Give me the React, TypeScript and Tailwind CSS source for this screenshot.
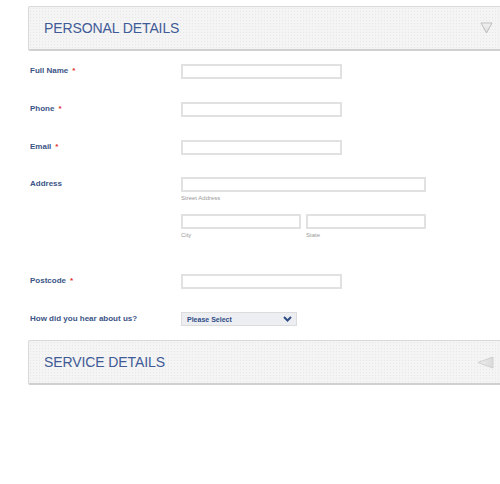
import React from "react";

const dots =
  "bg-[#f4f4f4] bg-[radial-gradient(#e8e8e8_0.6px,transparent_0.7px)] bg-[length:3px_3px]";

function SectionHeader({ title, open }: { title: string; open?: boolean }) {
  return (
    <div
      className={`ml-[28px] flex h-[45px] w-[474px] items-center justify-between rounded-l-[2px] border border-r-0 border-[#d9d9d9] border-b-2 border-b-[#d0d0d0] ${dots}`}
    >
      <h2 className="pl-[15px] text-[14px] font-normal leading-none tracking-[-0.1px] text-[#3f5b97]">
        {title}
      </h2>
      <div className="flex items-center">
        {open ? (
          <svg width="13" height="12" viewBox="0 0 13 12" className="mr-[9px]">
            <defs>
              <linearGradient id="gd" x1="0" y1="0" x2="0" y2="1">
                <stop offset="0" stopColor="#f2f2f2" />
                <stop offset="1" stopColor="#dcdcdc" />
              </linearGradient>
            </defs>
            <path d="M1 1 L12 1 L6.5 11 Z" fill="url(#gd)" stroke="#bdbdbd" strokeWidth="1" />
          </svg>
        ) : (
          <svg width="17" height="13" viewBox="0 0 17 13" className="mr-[8px]">
            <defs>
              <linearGradient id="gl" x1="0" y1="0" x2="1" y2="0">
                <stop offset="0" stopColor="#f0f0f0" />
                <stop offset="1" stopColor="#dadada" />
              </linearGradient>
            </defs>
            <path d="M1 6.5 L16 1 L16 12 Z" fill="url(#gl)" stroke="#cfcfcf" strokeWidth="1" />
          </svg>
        )}
      </div>
    </div>
  );
}

function Label({ text, required }: { text: string; required?: boolean }) {
  return (
    <div className="w-[181px] shrink-0 pl-[30px] pt-[2px] text-[8px] font-bold leading-[10px] text-[#3b5486]">
      {text}
      {required && <span className="ml-[4px] text-[#e0302a]">*</span>}
    </div>
  );
}

function TextInput({ width }: { width: string }) {
  return (
    <input
      type="text"
      className={`${width} h-[15px] border-2 border-[#e1e1e1] bg-white outline-none`}
    />
  );
}

function SubLabel({ text }: { text: string }) {
  return <div className="mt-[2px] text-[6px] leading-[8px] text-[#9a9a9a]">{text}</div>;
}

export default function App() {
  return (
    <div className="h-[484px] w-[500px] overflow-hidden bg-white pt-[6px] font-['Liberation_Sans',Arial,sans-serif]">
      <SectionHeader title="PERSONAL DETAILS" open />

      <div className="mt-[13px] flex flex-col">
        <div className="flex items-start">
          <Label text="Full Name" required />
          <TextInput width="w-[161px]" />
        </div>
        <div className="mt-[23px] flex items-start">
          <Label text="Phone" required />
          <TextInput width="w-[161px]" />
        </div>
        <div className="mt-[23px] flex items-start">
          <Label text="Email" required />
          <TextInput width="w-[161px]" />
        </div>
        <div className="mt-[22px] flex items-start">
          <Label text="Address" />
          <div className="flex flex-col">
            <TextInput width="w-[245px]" />
            <SubLabel text="Street Address" />
            <div className="mt-[12px] flex gap-[5px]">
              <div className="flex flex-col">
                <TextInput width="w-[120px]" />
                <SubLabel text="City" />
              </div>
              <div className="flex flex-col">
                <TextInput width="w-[120px]" />
                <SubLabel text="State" />
              </div>
            </div>
          </div>
        </div>
        <div className="mt-[35px] flex items-start">
          <Label text="Postcode" required />
          <TextInput width="w-[161px]" />
        </div>
        <div className="mt-[23px] flex items-start">
          <Label text="How did you hear about us?" />
          <div className="flex h-[14px] w-[116px] items-center justify-between border border-[#dcdcdc] bg-[#eceef1] pl-[5px] pr-[4px]">
            <span className="text-[7px] font-bold leading-none text-[#2f4c86]">Please Select</span>
            <svg width="9" height="6" viewBox="0 0 9 6">
              <path d="M1 1 L4.5 4.5 L8 1" fill="none" stroke="#2f4c86" strokeWidth="2" />
            </svg>
          </div>
        </div>
      </div>

      <div className="mt-[14px]">
        <SectionHeader title="SERVICE DETAILS" />
      </div>
    </div>
  );
}
